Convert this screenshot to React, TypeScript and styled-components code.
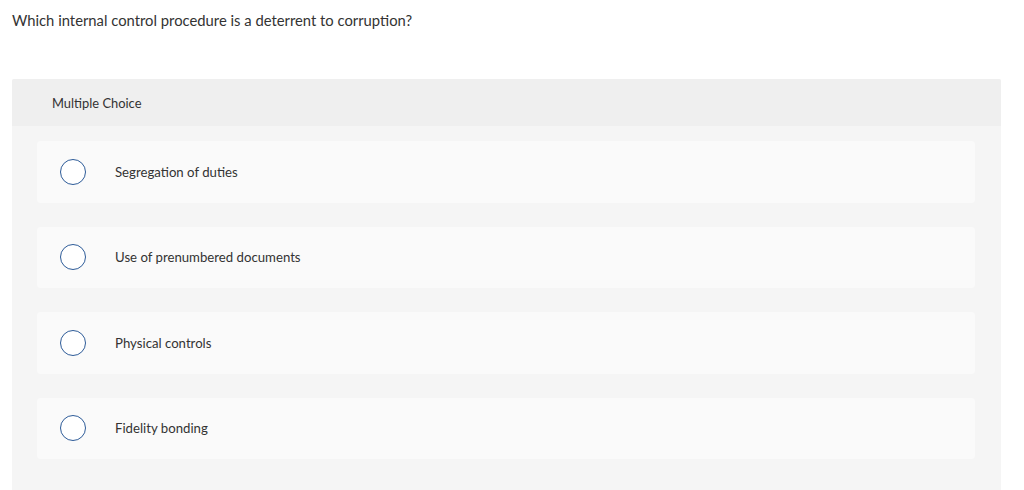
import React from "react";
import styled, { createGlobalStyle } from "styled-components";

const Global = createGlobalStyle`
  html, body { margin: 0; padding: 0; background: #ffffff; }
  body { font-family: "Lato", "Open Sans", Arial, sans-serif; color: #333333; }
`;

const Page = styled.div`
  width: 1024px;
  height: 490px;
  box-sizing: border-box;
  padding: 11px 23px 0 12px;
  display: flex;
  flex-direction: column;
  overflow: hidden;
`;

const Question = styled.p`
  margin: 0;
  font-size: 14.8px;
  line-height: 18px;
  color: #333333;
`;

const Panel = styled.section`
  margin-top: 50px;
  flex: 1;
  background: #f5f5f5;
  border-radius: 2px 2px 0 0;
  display: flex;
  flex-direction: column;
`;

const Header = styled.div`
  height: 47px;
  background: #efefef;
  display: flex;
  align-items: center;
  padding-left: 40px;
  font-size: 12.9px;
  color: #333333;
  border-radius: 2px 2px 0 0;
`;

const Options = styled.div`
  display: flex;
  flex-direction: column;
  gap: 24px;
  padding: 15px 26px 0 25px;
`;

const Option = styled.label`
  height: 61.5px;
  background: #fafafa;
  border-radius: 4px;
  display: flex;
  align-items: center;
  padding-left: 23px;
  gap: 29px;
  font-size: 13.2px;
  color: #333333;
  cursor: pointer;
`;

const Radio = styled.span`
  box-sizing: border-box;
  width: 26px;
  height: 26px;
  border-radius: 50%;
  border: 1.5px solid #2d5b98;
  background: #ffffff;
  flex-shrink: 0;
`;

const choices = [
  "Segregation of duties",
  "Use of prenumbered documents",
  "Physical controls",
  "Fidelity bonding",
];

export default function App() {
  return (
    <>
      <Global />
      <Page>
        <Question>Which internal control procedure is a deterrent to corruption?</Question>
        <Panel>
          <Header>Multiple Choice</Header>
          <Options>
            {choices.map((c) => (
              <Option key={c}>
                <Radio />
                {c}
              </Option>
            ))}
          </Options>
        </Panel>
      </Page>
    </>
  );
}
